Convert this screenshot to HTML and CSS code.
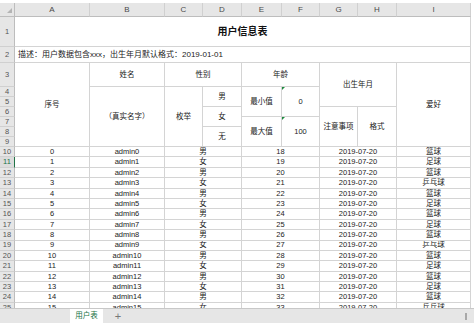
FILE: index.html
```html
<!DOCTYPE html>
<html lang="zh-CN">
<head>
    <meta charset="UTF-8">
    <meta name="viewport" content="width=device-width, initial-scale=1.0">
    <title>用户信息表</title>
    <link rel="stylesheet" href="styles.css">
</head>
<body>
    <div class="sheet">
        <div class="corner"><span class="corner-mark"></span></div>
        <div class="ch">A</div>
        <div class="ch">B</div>
        <div class="ch">C</div>
        <div class="ch">D</div>
        <div class="ch">E</div>
        <div class="ch">F</div>
        <div class="ch">G</div>
        <div class="ch">H</div>
        <div class="ch">I</div>

        <div class="rh">1</div>
        <div class="title">用户信息表</div>

        <div class="rh">2</div>
        <div class="desc">描述：用户数据包含xxx，出生年月默认格式：2019-01-01</div>

        <div class="rh">3</div>
        <div class="r7">序号</div>
        <div>姓名</div>
        <div class="c2">性别</div>
        <div class="c2">年龄</div>
        <div class="c2 r3">出生年月</div>
        <div class="r7">爱好</div>

        <div class="rh">4</div>
        <div class="r6">（真实名字）</div>
        <div class="r6">枚举</div>
        <div class="r2">男</div>
        <div class="r3">最小值</div>
        <div class="r3 flag">0</div>

        <div class="rh">5</div>

        <div class="rh">6</div>
        <div class="r2">女</div>
        <div class="r4">注意事项</div>
        <div class="r4">格式</div>

        <div class="rh">7</div>
        <div class="r3">最大值</div>
        <div class="r3 flag">100</div>

        <div class="rh">8</div>
        <div class="r2">无</div>

        <div class="rh">9</div>

        <div class="rh">10</div><div>0</div><div>admin0</div><div class="c2">男</div><div class="c2">18</div><div class="c2">2019-07-20</div><div>篮球</div>
        <div class="rh sel">11</div><div>1</div><div>admin1</div><div class="c2">女</div><div class="c2">19</div><div class="c2">2019-07-20</div><div>足球</div>
        <div class="rh">12</div><div>2</div><div>admin2</div><div class="c2">男</div><div class="c2">20</div><div class="c2">2019-07-20</div><div>篮球</div>
        <div class="rh">13</div><div>3</div><div>admin3</div><div class="c2">女</div><div class="c2">21</div><div class="c2">2019-07-20</div><div>乒乓球</div>
        <div class="rh">14</div><div>4</div><div>admin4</div><div class="c2">男</div><div class="c2">22</div><div class="c2">2019-07-20</div><div>篮球</div>
        <div class="rh">15</div><div>5</div><div>admin5</div><div class="c2">女</div><div class="c2">23</div><div class="c2">2019-07-20</div><div>足球</div>
        <div class="rh">16</div><div>6</div><div>admin6</div><div class="c2">男</div><div class="c2">24</div><div class="c2">2019-07-20</div><div>篮球</div>
        <div class="rh">17</div><div>7</div><div>admin7</div><div class="c2">女</div><div class="c2">25</div><div class="c2">2019-07-20</div><div>足球</div>
        <div class="rh">18</div><div>8</div><div>admin8</div><div class="c2">男</div><div class="c2">26</div><div class="c2">2019-07-20</div><div>篮球</div>
        <div class="rh">19</div><div>9</div><div>admin9</div><div class="c2">女</div><div class="c2">27</div><div class="c2">2019-07-20</div><div>乒乓球</div>
        <div class="rh">20</div><div>10</div><div>admin10</div><div class="c2">男</div><div class="c2">28</div><div class="c2">2019-07-20</div><div>篮球</div>
        <div class="rh">21</div><div>11</div><div>admin11</div><div class="c2">女</div><div class="c2">29</div><div class="c2">2019-07-20</div><div>足球</div>
        <div class="rh">22</div><div>12</div><div>admin12</div><div class="c2">男</div><div class="c2">30</div><div class="c2">2019-07-20</div><div>篮球</div>
        <div class="rh">23</div><div>13</div><div>admin13</div><div class="c2">女</div><div class="c2">31</div><div class="c2">2019-07-20</div><div>足球</div>
        <div class="rh">24</div><div>14</div><div>admin14</div><div class="c2">男</div><div class="c2">32</div><div class="c2">2019-07-20</div><div>篮球</div>
        <div class="rh">25</div><div>15</div><div>admin15</div><div class="c2">女</div><div class="c2">33</div><div class="c2">2019-07-20</div><div>乒乓球</div>
    </div>

    <div class="tabs">
        <div class="tab-nav"></div>
        <div class="tab active">用户表</div>
        <div class="tab-add">+</div>
        <div class="tab-space"></div>
        <div class="tab-split"></div>
    </div>
</body>
</html>
```

FILE: styles.css
```css
* {
    box-sizing: border-box;
}

body {
    margin: 0;
    padding-top: 3px;
    width: 474px;
    height: 323px;
    overflow: hidden;
    background: #fff;
    font-family: "Liberation Sans", "Noto Sans CJK SC", sans-serif;
    color: #222;
}

.sheet {
    display: grid;
    grid-template-columns: 15px 75px 75px 38px 39px 40px 38px 38px 39px 74px;
    grid-template-rows: 14px 30px 16px 24px repeat(6, 10px) repeat(16, 10.4px);
    width: 471px;
    height: 305px;
    overflow: hidden;
    font-size: 7.5px;
}

.sheet > div {
    display: flex;
    align-items: center;
    justify-content: center;
    border-right: 1px solid #d4d4d4;
    border-bottom: 1px solid #d4d4d4;
    white-space: nowrap;
    overflow: hidden;
    line-height: 1;
}

.sheet > .corner {
    align-items: flex-end;
    justify-content: flex-end;
    padding: 0 2px 3px 0;
    background: #e6e6e6;
    border-right-color: #bdbdbd;
    border-bottom-color: #bdbdbd;
}

.corner-mark {
    width: 0;
    height: 0;
    border-left: 5px solid transparent;
    border-bottom: 5px solid #b4b4b4;
}

.sheet > .ch {
    background: #e6e6e6;
    color: #4a4a4a;
    font-size: 8px;
    border-right-color: #d0d0d0;
    border-bottom-color: #bdbdbd;
}

.sheet > .rh {
    grid-column: 1;
    background: #e6e6e6;
    color: #555;
    font-size: 7.5px;
    border-right-color: #bdbdbd;
    border-bottom-color: #d0d0d0;
}

.sheet > .rh.sel {
    color: #217346;
    background: #dcdcdc;
    border-right: 1px solid #217346;
}

.sheet > .title {
    grid-column: 2 / span 9;
    font-size: 10px;
    font-weight: bold;
    color: #111;
}

.sheet > .desc {
    grid-column: 2 / span 9;
    justify-content: flex-start;
    padding-left: 3px;
    font-size: 8px;
}

.c2 {
    grid-column: span 2;
}

.r2 {
    grid-row: span 2;
}

.r3 {
    grid-row: span 3;
}

.r4 {
    grid-row: span 4;
}

.r6 {
    grid-row: span 6;
}

.r7 {
    grid-row: span 7;
}

.sheet > .flag {
    position: relative;
}

.flag::before {
    content: "";
    position: absolute;
    top: 0;
    left: 0;
    border-top: 3px solid #1f8a3f;
    border-right: 3px solid transparent;
}

.tabs {
    display: flex;
    align-items: stretch;
    height: 15px;
    background: #e6e6e6;
    border-top: 1px solid #c8c8c8;
    line-height: 1;
}

.tab-nav {
    width: 70px;
}

.tab {
    width: 33px;
    display: flex;
    align-items: center;
    justify-content: center;
    font-size: 7.5px;
}

.tab.active {
    background: #fff;
    color: #217346;
}

.tab-add {
    width: 30px;
    display: flex;
    align-items: center;
    justify-content: center;
    font-size: 11px;
    color: #777;
}

.tab-space {
    flex: 1;
}

.tab-split {
    width: 2px;
    height: 7px;
    margin: 4px 7px 0 0;
    background: #a8a8a8;
}
```
